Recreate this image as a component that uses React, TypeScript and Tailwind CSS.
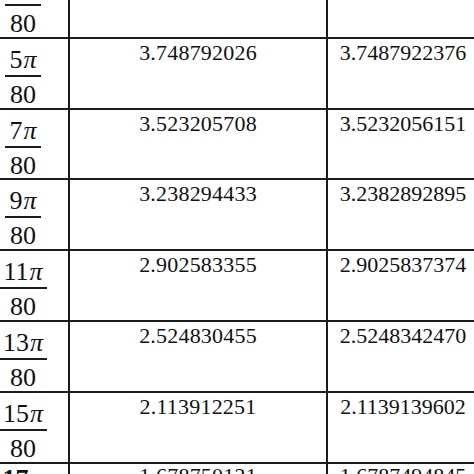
const rows = [
  { k: "3", a: "", b: "" },
  { k: "5", a: "3.748792026", b: "3.7487922376" },
  { k: "7", a: "3.523205708", b: "3.5232056151" },
  { k: "9", a: "3.238294433", b: "3.2382892895" },
  { k: "11", a: "2.902583355", b: "2.9025837374" },
  { k: "13", a: "2.524830455", b: "2.5248342470" },
  { k: "15", a: "2.113912251", b: "2.1139139602" },
];

const Fraction = ({ k }: { k: string }) => (
  <div className="w-[46px] flex justify-center">
    <div className="inline-flex flex-col items-stretch">
      <div className="px-[4px] text-center leading-none">
        {k}
        <i className="ml-[1px]">π</i>
      </div>
      <div className="mt-[2px] h-[2px] bg-[#1c1c1c]" />
      <div className="mt-[5px] text-center leading-none">80</div>
    </div>
  </div>
);

export default function App() {
  return (
    <div
      className="w-[474px] h-[474px] overflow-hidden bg-white text-[#111]"
      style={{ fontFamily: '"Liberation Serif", "Times New Roman", serif' }}
    >
      <div className="-mt-[32px] w-[480px]">
        {rows.map((r) => (
          <div key={r.k} className="flex h-[70.83px] border-b-2 border-[#1c1c1c]">
            <div className="w-[70px] shrink-0 border-r-2 border-[#1c1c1c] pt-[8px] text-[26px]">
              <Fraction k={r.k} />
            </div>
            <div className="w-[258px] shrink-0 border-r-2 border-[#1c1c1c] pt-[3px] text-center text-[22px] leading-none tracking-[0.2px]">
              {r.a}
            </div>
            <div className="w-[150px] shrink-0 pt-[3px] text-center text-[22px] leading-none">
              {r.b}
            </div>
          </div>
        ))}
        <div className="flex h-[70.83px]">
          <div className="w-[70px] shrink-0 border-r-2 border-[#1c1c1c] pt-[2px] text-[26px]">
            <div className="w-[46px] text-center font-bold leading-none">
              17<i className="ml-[1px]">π</i>
            </div>
          </div>
          <div className="w-[258px] shrink-0 border-r-2 border-[#1c1c1c] pt-[1px] text-center text-[22px] leading-none tracking-[0.2px]">
            1.678750121
          </div>
          <div className="w-[150px] shrink-0 pt-[1px] text-center text-[22px] leading-none">
            1.6787494845
          </div>
        </div>
      </div>
    </div>
  );
}
